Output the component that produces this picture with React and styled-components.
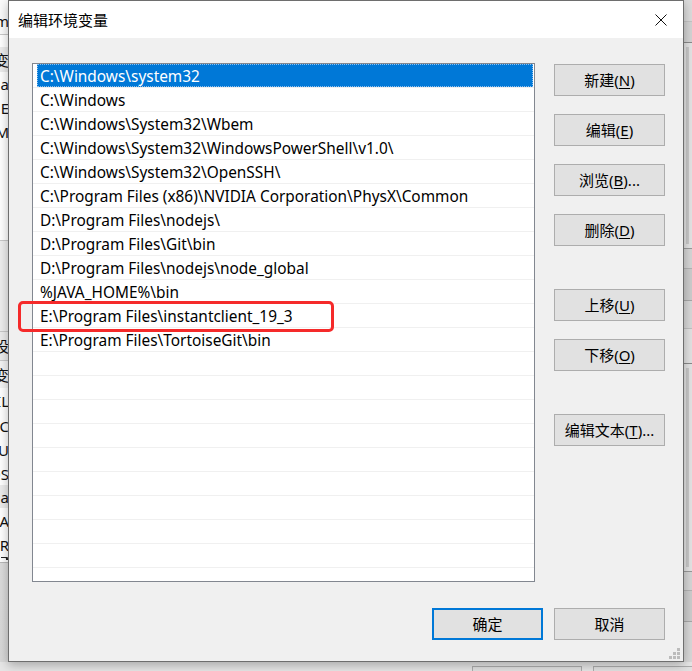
import React from "react";
import styled, { createGlobalStyle } from "styled-components";

const GlobalStyle = createGlobalStyle`
  html, body {
    margin: 0;
    padding: 0;
    overflow: hidden;
    background: #e9e9e9;
  }
`;

const paths = [
  "C:\\Windows\\system32",
  "C:\\Windows",
  "C:\\Windows\\System32\\Wbem",
  "C:\\Windows\\System32\\WindowsPowerShell\\v1.0\\",
  "C:\\Windows\\System32\\OpenSSH\\",
  "C:\\Program Files (x86)\\NVIDIA Corporation\\PhysX\\Common",
  "D:\\Program Files\\nodejs\\",
  "D:\\Program Files\\Git\\bin",
  "D:\\Program Files\\nodejs\\node_global",
  "%JAVA_HOME%\\bin",
  "E:\\Program Files\\instantclient_19_3",
  "E:\\Program Files\\TortoiseGit\\bin",
];

const leftStrip = [
  { h: 35, bg: "#fbfbfb", text: "m", line: "#c8c8c8", top: 12 },
  { h: 12, bg: "#ffffff" },
  { h: 25, bg: "#ececec", text: "变" },
  { h: 24, bg: "#ffffff", text: "a" },
  { h: 24, bg: "#ffffff", text: "E" },
  { h: 24, bg: "#ffffff", text: "M" },
  { h: 97, bg: "#ffffff", line: "#c8c8c8" },
  { h: 91, bg: "#eeeeee", line: "#c8c8c8" },
  { h: 29, bg: "#ececec", text: "设", line: "#c8c8c8" },
  { h: 27, bg: "#f4f4f4", text: "变" },
  { h: 25, bg: "#ffffff", text: "IL" },
  { h: 25, bg: "#ffffff", text: "IC" },
  { h: 24, bg: "#ffffff", text: "IU" },
  { h: 23, bg: "#ffffff", text: "DS" },
  { h: 23, bg: "#ececec", text: "a" },
  { h: 25, bg: "#ffffff", text: "A" },
  { h: 24, bg: "#ffffff", text: "R" },
  { h: 6, bg: "#ffffff", line: "#b8b8b8", cap: true },
];

const rightStrip = [
  { h: 22, bg: "#dcdcdc", line: "#c4c4c4" },
  { h: 21, bg: "#d4d4d4", line: "#8a8a8a" },
  { h: 206, bg: "#e4e4e4", line: "#9a9a9a", track: true },
  { h: 20, bg: "#d6d6d6", line: "#b4b4b4" },
  { h: 32, bg: "#cdcdcd", line: "#a8a8a8" },
  { h: 28, bg: "#d8d8d8", line: "#c0c0c0" },
  { h: 35, bg: "#e2e2e2", line: "#8a8a8a" },
  { h: 208, bg: "#e4e4e4", line: "#9a9a9a", track: true },
  { h: 19, bg: "#d6d6d6", line: "#b4b4b4" },
  { h: 31, bg: "#cdcdcd", line: "#a8a8a8" },
  { h: 40, bg: "#d8d8d8" },
];

const App = () => {
  const rows = Array.from({ length: 22 }, (_, i) => paths[i] || "");

  return (
    <>
      <GlobalStyle />
      <Desktop>
        <BackWindow>
          <EdgeColumn>
            {leftStrip.map((s, i) => (
              <EdgeCell key={i} $h={s.h} $bg={s.bg} $line={s.line} $top={s.top}>
                {s.text && <EdgeText>{s.text}</EdgeText>}
                {s.cap && <GlyphCap />}
              </EdgeCell>
            ))}
          </EdgeColumn>
          <div />
          <EdgeColumn>
            {rightStrip.map((s, i) => (
              <EdgeCell key={i} $h={s.h} $bg={s.bg} $line={s.line}>
                {s.track && <TrackBar />}
              </EdgeCell>
            ))}
          </EdgeColumn>
          <BottomStrip>
            <BackButton />
            <BackButton />
          </BottomStrip>
        </BackWindow>

        <Dialog>
          <TitleBar>
            <Title>编辑环境变量</Title>
            <CloseButton>
              <svg width="12" height="12" viewBox="0 0 12 12">
                <path d="M0.5 0.5 L11.5 11.5 M11.5 0.5 L0.5 11.5" stroke="#111" strokeWidth="1" fill="none" />
              </svg>
            </CloseButton>
          </TitleBar>

          <Body>
            <Main>
              <ListBox>
                {rows.map((p, i) => (
                  <Row key={i}>
                    <Cell $selected={i === 0}>{p}</Cell>
                  </Row>
                ))}
              </ListBox>

              <SideButtons>
                <ButtonGroup>
                  <Button>新建(<u>N</u>)</Button>
                  <Button>编辑(<u>E</u>)</Button>
                  <Button>浏览(<u>B</u>)...</Button>
                  <Button>删除(<u>D</u>)</Button>
                </ButtonGroup>
                <ButtonGroup $offset={43}>
                  <Button>上移(<u>U</u>)</Button>
                  <Button>下移(<u>O</u>)</Button>
                </ButtonGroup>
                <ButtonGroup $offset={43}>
                  <Button>编辑文本(<u>T</u>)...</Button>
                </ButtonGroup>
              </SideButtons>
            </Main>

            <Footer>
              <Button $default>确定</Button>
              <Button>取消</Button>
            </Footer>

            <Highlight />
            <Grip>
              <svg width="12" height="12" viewBox="0 0 12 12">
                {[
                  [8, 0], [8, 4], [4, 4], [8, 8], [4, 8], [0, 8],
                ].map(([x, y], i) => (
                  <rect key={i} x={x} y={y} width="3" height="3" fill="#bcbcbc" />
                ))}
              </svg>
            </Grip>
          </Body>
        </Dialog>
      </Desktop>
    </>
  );
};

export default App;

const Desktop = styled.div`
  width: 692px;
  height: 671px;
  overflow: hidden;
  display: grid;
  grid-template: 1fr / 1fr;
  background: #e9e9e9;
  font-family: "Noto Sans", "Noto Sans CJK SC", sans-serif;

  > * {
    grid-area: 1 / 1;
  }
`;

const BackWindow = styled.div`
  display: grid;
  grid-template-columns: 8px 1fr 8px;
  grid-template-rows: 662px 1fr;
`;

const EdgeColumn = styled.div`
  display: flex;
  flex-direction: column;
  overflow: hidden;
  background: linear-gradient(#f4f4f4, #d8d8d8);
`;

const EdgeCell = styled.div`
  flex: 0 0 ${(p) => p.$h}px;
  box-sizing: border-box;
  background: ${(p) => p.$bg};
  border-bottom: ${(p) => (p.$line ? `1px solid ${p.$line}` : "none")};
  display: flex;
  align-items: ${(p) => (p.$top ? "flex-start" : "center")};
  padding-top: ${(p) => p.$top || 0}px;
  justify-content: flex-end;
  overflow: hidden;
`;

const EdgeText = styled.span`
  font-size: 15px;
  line-height: 18px;
  color: #111;
  white-space: nowrap;
  margin-right: -1px;
`;

const GlyphCap = styled.div`
  width: 5px;
  height: 2px;
  margin-top: -3px;
  border-top: 2px solid #222;
  border-right: 2px solid #222;
  border-top-right-radius: 3px;
`;

const TrackBar = styled.div`
  align-self: stretch;
  width: 3px;
  margin: 4px 3px 4px 0;
  background: #c9c9c9;
`;

const BottomStrip = styled.div`
  grid-column: 1 / -1;
  display: flex;
  gap: 11px;
  padding-left: 472px;
  padding-top: 4px;
  background: #e6e6e6;
`;

const BackButton = styled.div`
  width: 110px;
  height: 20px;
  box-sizing: border-box;
  border: 1px solid #adadad;
  background: #e1e1e1;
  flex-shrink: 0;
`;

const Dialog = styled.div`
  z-index: 1;
  align-self: start;
  justify-self: start;
  margin-left: 8px;
  width: 676px;
  height: 662px;
  box-sizing: border-box;
  border: 1px solid #6e6e6e;
  background: #f0f0f0;
  display: flex;
  flex-direction: column;
  box-shadow: 0 3px 10px rgba(0, 0, 0, 0.28);
`;

const TitleBar = styled.div`
  height: 37px;
  flex-shrink: 0;
  background: #ffffff;
  display: flex;
  align-items: center;
  padding-left: 9px;
`;

const Title = styled.div`
  flex: 1;
  font-size: 15px;
  color: #000;
  font-family: "Noto Sans CJK SC", sans-serif;
  margin-top: -1px;
`;

const CloseButton = styled.div`
  width: 44px;
  height: 37px;
  display: flex;
  align-items: center;
  justify-content: center;
`;

const Body = styled.div`
  flex: 1;
  position: relative;
  display: flex;
  flex-direction: column;
  padding: 25px 18px 21px 23px;
`;

const Main = styled.div`
  display: grid;
  grid-template-columns: 503px 111px;
  column-gap: 19px;
`;

const ListBox = styled.div`
  height: 519px;
  box-sizing: border-box;
  border: 1px solid #828790;
  background: #ffffff;
  overflow: hidden;
`;

const Row = styled.div`
  height: 24px;
  box-sizing: border-box;
  border-bottom: 1px solid #f0f0f0;
  display: flex;
`;

const Cell = styled.div`
  flex: 1;
  margin: 0 1px 0 4px;
  padding: 2px 0 0 3px;
  display: flex;
  align-items: center;
  font-size: 15.4px;
  white-space: nowrap;
  color: ${(p) => (p.$selected ? "#ffffff" : "#000000")};
  background: ${(p) => (p.$selected ? "#0078d7" : "transparent")};
  outline: ${(p) => (p.$selected ? "1px dotted #8cc0ee" : "none")};
  outline-offset: -1px;
`;

const SideButtons = styled.div`
  display: flex;
  flex-direction: column;
  padding-top: 1px;
`;

const ButtonGroup = styled.div`
  display: flex;
  flex-direction: column;
  gap: 18px;
  margin-top: ${(p) => p.$offset || 0}px;
`;

const Button = styled.div`
  width: 111px;
  height: 32px;
  box-sizing: border-box;
  border: ${(p) => (p.$default ? "2px solid #0078d7" : "1px solid #adadad")};
  background: #e1e1e1;
  display: flex;
  align-items: center;
  justify-content: center;
  padding-bottom: 1px;
  font-size: 15px;
  color: #000;
  white-space: nowrap;

  u {
    text-underline-offset: 2px;
  }
`;

const Footer = styled.div`
  display: flex;
  justify-content: flex-end;
  gap: 11px;
  margin-top: 26px;
`;

const Highlight = styled.div`
  position: absolute;
  left: 9px;
  top: 263px;
  width: 316px;
  height: 31px;
  box-sizing: border-box;
  border: 3.5px solid #f52a2a;
  border-radius: 5px;
  pointer-events: none;
`;

const Grip = styled.div`
  position: absolute;
  right: 2px;
  bottom: 1px;
  line-height: 0;
`;
